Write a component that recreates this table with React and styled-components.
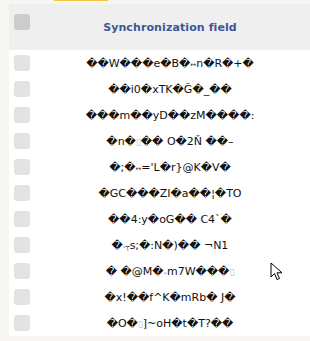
import React from 'react';
import styled, { createGlobalStyle } from 'styled-components';

const GlobalStyle = createGlobalStyle`
  html, body {
    margin: 0;
    padding: 0;
    background: #f7f6f3;
    overflow: hidden;
  }
  body {
    font-family: 'DejaVu Sans', Verdana, sans-serif;
  }
`;

const Page = styled.div`
  position: relative;
  width: 310px;
  height: 341px;
  overflow: hidden;
  background: #f7f6f3;
`;

const TabMark = styled.div`
  margin-left: 54px;
  width: 54px;
  height: 1px;
  background: #f6c445;
  margin-bottom: 3px;
`;

const Table = styled.div`
  margin-left: 9px;
  background: #fff;
`;

const HeaderRow = styled.div`
  display: grid;
  grid-template-columns: 26px 1fr;
  align-items: center;
  height: 46px;
  background: #efefef;
  padding-right: 5px;
`;

const Row = styled.div`
  display: grid;
  grid-template-columns: 26px 1fr;
  align-items: center;
  height: 26px;
  padding-right: 5px;
`;

const Check = styled.div`
  width: 16px;
  height: 16px;
  margin-left: 5px;
  border-radius: 3px;
  background: ${p => (p.$header ? '#cccccc' : '#e3e3e3')};
`;

const HeaderCheck = styled(Check)`
  margin-top: -10px;
`;

const HeaderTitle = styled.div`
  text-align: center;
  font-weight: bold;
  font-size: 11px;
  color: #3b5797;
  letter-spacing: 0.1px;
`;

const Cell = styled.div`
  text-align: center;
  font-size: 11px;
  color: #111;
  white-space: nowrap;
`;

const Tiny = styled.span`
  color: ${p => (p.$faint ? '#bbb' : '#333')};
  font-size: ${p => (p.$faint ? '9px' : '7px')};
`;

const Cursor = styled.svg`
  position: absolute;
  left: 270px;
  top: 262px;
`;

const F = '\uFFFD';

const rows = [
  [`${F}${F}W${F}${F}${F}e${F}B${F}`, '~\u2194', `n${F}R${F}+${F}`],
  [`${F}${F}i0${F}xTK${F}\u011E${F}_${F}${F}`],
  [`${F}${F}${F}m${F}${F}yD${F}${F}zM${F}${F}${F}${F}:`],
  [`${F}n${F}`, 'box', `${F}${F} O${F}2\u0147 ${F}${F}\u2013`],
  [`${F};${F}`, '~\u2194', `='L${F}r}@K${F}V${F}`],
  [`${F}GC${F}${F}${F}ZI${F}a${F}${F}\u00A6${F}TO`],
  [`${F}${F}4:y${F}oG${F}${F} C4\`${F}`],
  [`${F}`, '~-\u252C', `s;${F}:N${F})${F}${F} \u00ACN1`],
  [`${F} ${F}@M${F}`, '~\u2013', `m7W${F}${F}${F}`, 'box'],
  [`${F}x!${F}${F}f^K${F}mRb${F} J${F}`],
  [`${F}O${F}`, 'box', `]~oH${F}t${F}T?${F}${F}`],
];

const renderPart = (p, j) => {
  if (p === 'box') return <Tiny key={j} $faint>{'\u25AF'}</Tiny>;
  if (p.startsWith('~') && p.length > 1 && p.length < 4) return <Tiny key={j}>{p.slice(1)}</Tiny>;
  return <span key={j}>{p}</span>;
};

const App = () => (
  <Page>
    <GlobalStyle />
    <TabMark />
    <Table>
      <HeaderRow>
        <HeaderCheck $header />
        <HeaderTitle>Synchronization field</HeaderTitle>
      </HeaderRow>
      {rows.map((parts, i) => (
        <Row key={i}>
          <Check />
          <Cell>{parts.map(renderPart)}</Cell>
        </Row>
      ))}
    </Table>
    <Cursor width="14" height="20" viewBox="0 0 14 20">
      <path
        d="M1 1 L1 15 L4.5 11.5 L7 17.5 L9.5 16.5 L7 10.8 L12 10.8 Z"
        fill="#fff"
        stroke="#000"
        strokeWidth="1"
        strokeLinejoin="miter"
      />
    </Cursor>
  </Page>
);

export default App;
